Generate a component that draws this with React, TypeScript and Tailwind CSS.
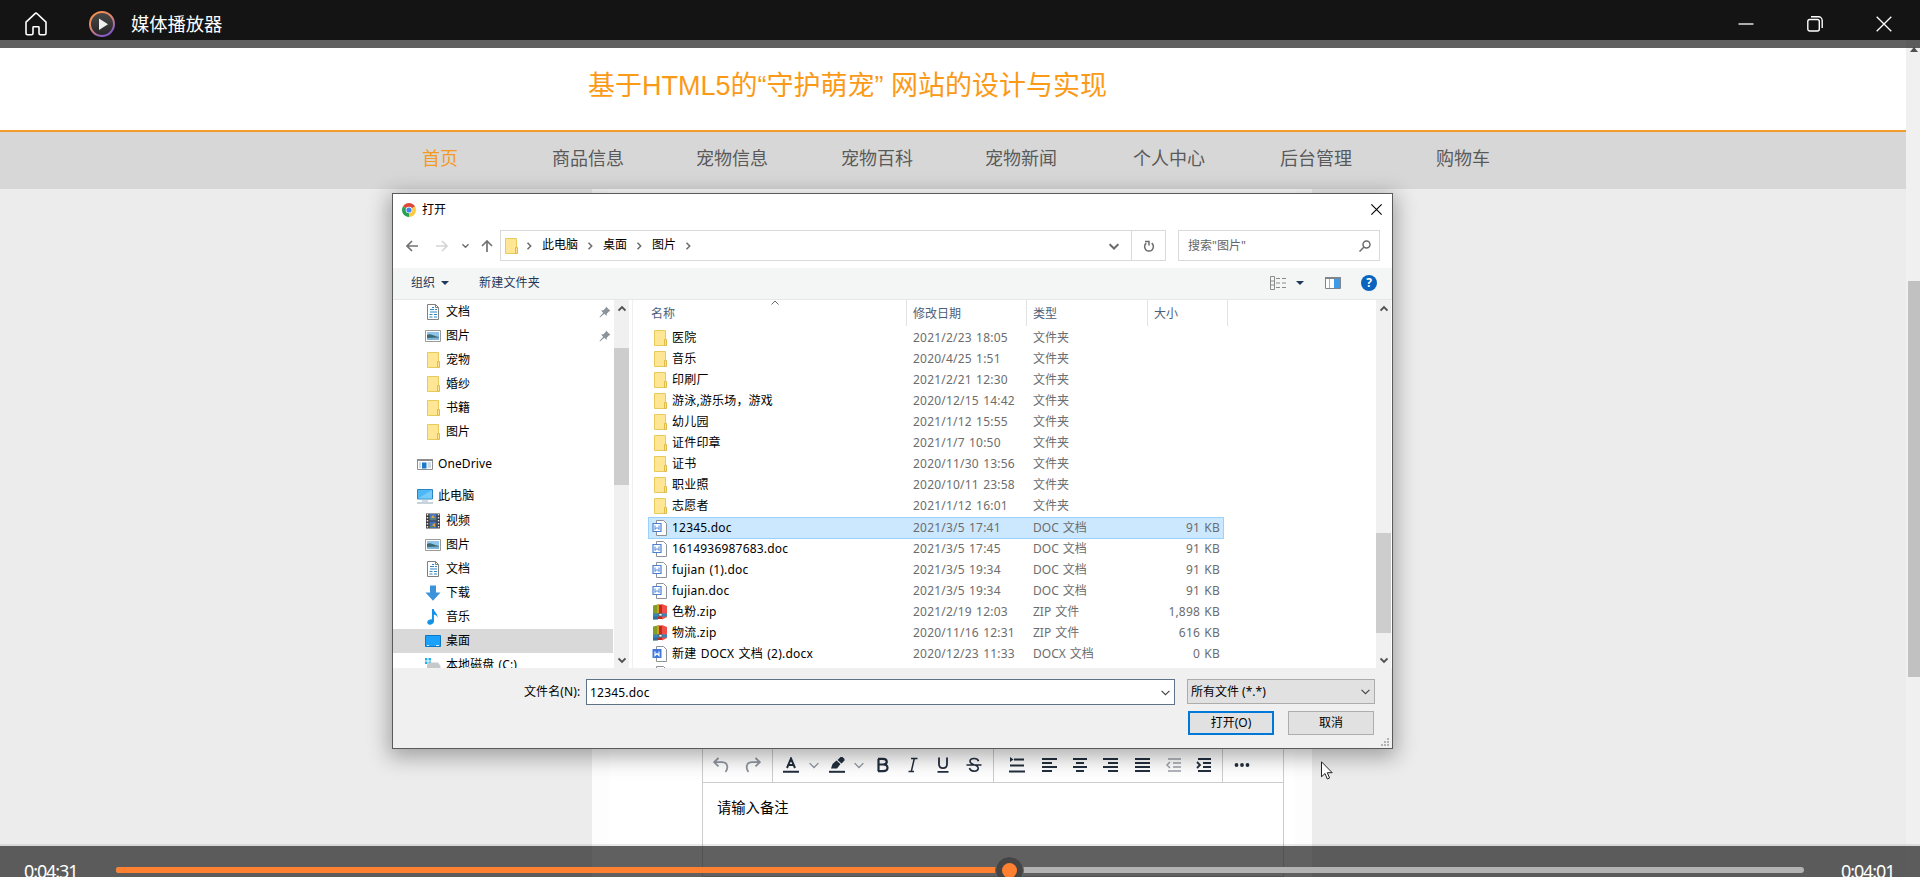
import type { ReactNode } from 'react';

type IconName =
    | 'folder' | 'document' | 'picture' | 'onedrive' | 'computer' | 'video'
    | 'download' | 'music' | 'desktop' | 'disk' | 'doc' | 'docx' | 'zip';

const navItems = [
    { label: '首页', className: 'ml-[422px] text-[#f39a1f]' },
    { label: '商品信息', className: 'ml-[94px]' },
    { label: '宠物信息', className: 'ml-[72px]' },
    { label: '宠物百科', className: 'ml-[73px]' },
    { label: '宠物新闻', className: 'ml-[72px]' },
    { label: '个人中心', className: 'ml-[76px]' },
    { label: '后台管理', className: 'ml-[75px]' },
    { label: '购物车', className: 'ml-[84px]' },
];

const treeItems: { icon: IconName; label: string; root?: boolean; pinned?: boolean; active?: boolean; gap?: string }[] = [
    { icon: 'document', label: '文档', pinned: true },
    { icon: 'picture', label: '图片', pinned: true },
    { icon: 'folder', label: '宠物' },
    { icon: 'folder', label: '婚纱' },
    { icon: 'folder', label: '书籍' },
    { icon: 'folder', label: '图片' },
    { icon: 'onedrive', label: 'OneDrive', root: true, gap: 'mt-2' },
    { icon: 'computer', label: '此电脑', root: true, gap: 'mt-2' },
    { icon: 'video', label: '视频', gap: 'mt-px' },
    { icon: 'picture', label: '图片' },
    { icon: 'document', label: '文档' },
    { icon: 'download', label: '下载' },
    { icon: 'music', label: '音乐' },
    { icon: 'desktop', label: '桌面', active: true },
    { icon: 'disk', label: '本地磁盘 (C:)' },
];

const files: { icon: IconName; name: string; date: string; type: string; size?: string; selected?: boolean; tall?: boolean }[] = [
    { icon: 'folder', name: '医院', date: '2021/2/23 18:05', type: '文件夹' },
    { icon: 'folder', name: '音乐', date: '2020/4/25 1:51', type: '文件夹' },
    { icon: 'folder', name: '印刷厂', date: '2021/2/21 12:30', type: '文件夹' },
    { icon: 'folder', name: '游泳,游乐场，游戏', date: '2020/12/15 14:42', type: '文件夹' },
    { icon: 'folder', name: '幼儿园', date: '2021/1/12 15:55', type: '文件夹' },
    { icon: 'folder', name: '证件印章', date: '2021/1/7 10:50', type: '文件夹' },
    { icon: 'folder', name: '证书', date: '2020/11/30 13:56', type: '文件夹' },
    { icon: 'folder', name: '职业照', date: '2020/10/11 23:58', type: '文件夹' },
    { icon: 'folder', name: '志愿者', date: '2021/1/12 16:01', type: '文件夹', tall: true },
    { icon: 'doc', name: '12345.doc', date: '2021/3/5 17:41', type: 'DOC 文档', size: '91 KB', selected: true, tall: true },
    { icon: 'doc', name: '1614936987683.doc', date: '2021/3/5 17:45', type: 'DOC 文档', size: '91 KB' },
    { icon: 'doc', name: 'fujian (1).doc', date: '2021/3/5 19:34', type: 'DOC 文档', size: '91 KB' },
    { icon: 'doc', name: 'fujian.doc', date: '2021/3/5 19:34', type: 'DOC 文档', size: '91 KB' },
    { icon: 'zip', name: '色粉.zip', date: '2021/2/19 12:03', type: 'ZIP 文件', size: '1,898 KB' },
    { icon: 'zip', name: '物流.zip', date: '2020/11/16 12:31', type: 'ZIP 文件', size: '616 KB' },
    { icon: 'docx', name: '新建 DOCX 文档 (2).docx', date: '2020/12/23 11:33', type: 'DOCX 文档', size: '0 KB' },
];

/* Small 16px icons of the file tree and the file list */
const iconShapes: Record<IconName, ReactNode> = {
    folder: (
        <>
            <path d="M2.5.5h11v15h-11z" fill="#ffe694" stroke="#e8c95c" />
            <path d="M12.5 9.5h2v6h-2z" fill="#ffe28a" stroke="#dfbb4a" />
        </>
    ),
    document: (
        <>
            <path d="M2.5.5h8l3 3v12h-11z" fill="#fff" stroke="#808080" />
            <path d="M10.5.5v3h3" fill="none" stroke="#808080" />
            <path d="M7 3.5h2M5 5.5h4M10 5.5h2M5 8h7M4.5 10.5h3M9 10.5h3M4.5 13h3M9 13h3" stroke="#2c86c8" strokeWidth="1.200" />
        </>
    ),
    picture: (
        <>
            <path d="M.5 2.5h15v11H.5z" fill="#fff" stroke="#9a9a9a" />
            <path d="M2 4h12v8H2z" fill="#8ec3ea" />
            <path d="M2 7c3-2 6 1 12 2v3H2z" fill="#3c6a74" />
            <path d="M2 10l12-.5V12H2z" fill="#7db5d6" />
        </>
    ),
    onedrive: (
        <>
            <path d="M.5 3.5h15v10H.5z" fill="#fff" stroke="#8d8d8d" />
            <path d="M0 3h16v2H0z" fill="#8d8d8d" />
            <path d="M5 6.500h4.500v6H5z" fill="#1979ca" />
            <path d="M2 7h2M2 9h2M2 11h2M10.500 7H14M10.500 9H14M10.500 11H14" stroke="#9bb7d0" />
        </>
    ),
    computer: (
        <>
            <path d="M.5 1.500h15v9.500H.5z" fill="#4db8f5" stroke="#2a86c4" />
            <path d="M1 10.500L15 2v8.500z" fill="#77cbfa" />
            <path d="M5 13h6" stroke="#9db6c7" />
            <path d="M0 15h16" stroke="#8fa5bb" />
        </>
    ),
    video: (
        <>
            <path d="M1 .5h14v15H1z" fill="#3a3a3a" />
            <path d="M2.500 1v14M13.500 1v14" stroke="#e6e6e6" strokeWidth="1.500" strokeDasharray="1.500 1.500" />
            <path d="M4.500 1h7v6.500h-7z" fill="#4d79c7" />
            <path d="M4.500 8.500h7V15h-7z" fill="#4470bf" />
            <path d="M6 5l2-3 2 3zM7 12l3-2v4z" fill="#e2a52e" />
            <path d="M5 6h6M5 13.500h4" stroke="#5d8a3c" />
        </>
    ),
    download: <path d="M5 .5h6v7h4.500L8 15.800.5 7.500H5z" fill="#3b93dc" />,
    music: (
        <>
            <path d="M7 0h1.800c.4 3.500 4.200 4 3.700 9-.5-2-1.700-3-3.600-3.400v6.900H7z" fill="#1592e6" />
            <ellipse cx="5.600" cy="13" rx="3.400" ry="2.500" fill="#1592e6" transform="rotate(-15 5.600 13)" />
        </>
    ),
    desktop: (
        <>
            <path d="M.5 2.500h15v11H.5z" fill="#1ba1fb" stroke="#0c78c8" />
            <path d="M2 12.500h2M11 12.500h3" stroke="#d6eeff" />
        </>
    ),
    disk: (
        <>
            <path d="M0 1h2.500v2.500H0zM3.500 1H6v2.500H3.500zM0 4.500h2.500V7H0zM3.500 4.500H6V7H3.500z" fill="#22b2e8" />
            <path d="M2 8l2-2.500h9L15.500 9v5H2z" fill="#c6c9cc" />
        </>
    ),
    doc: (
        <>
            <path d="M4.500 3V.5h7l3 3v12h-10V12" fill="#fff" stroke="#8d9298" />
            <path d="M1 3.500h8v8H1z" fill="#fff" stroke="#4a80d4" strokeWidth="1.200" />
            <path d="M3 5.500v4l2-2 2 2v-4" fill="none" stroke="#4a80d4" />
        </>
    ),
    docx: (
        <>
            <path d="M4.500 3V.5h7l3 3v12h-10V12" fill="#fff" stroke="#8d9298" />
            <path d="M.5 3h9v9h-9z" fill="#3f78dc" />
            <path d="M3 5.500v4l2-2 2 2v-4" fill="none" stroke="#fff" strokeWidth="1.200" />
        </>
    ),
    zip: (
        <>
            <path d="M1 1.500L6 .5V15l-5 .5z" fill="#7f9f27" />
            <path d="M1 11h5v4.500H1z" fill="#2b6f9e" />
            <path d="M6 .5h4V15H6z" fill="#c22a20" />
            <path d="M5 .5h2V9H5z" fill="#d2a01e" />
            <path d="M10 0l5 2v11l-5 2.500z" fill="#ee5048" />
            <path d="M1 9.500h14v3H1z" fill="#3487b6" />
            <path d="M7 9.500h3v2.500H7z" fill="#fff" stroke="#4b6577" strokeWidth=".8" />
        </>
    ),
};

function FileIcon({ name, className = '' }: { name: IconName; className?: string }) {
    return (
        <svg viewBox="0 0 16 16" className={`w-4 h-4 shrink-0 ${className}`}>
            {iconShapes[name]}
        </svg>
    );
}

function Chevron({ d, size = 8, color = '#6b6b6b', width = 1.5, className = '' }: { d: string; size?: number; color?: string; width?: number; className?: string }) {
    return (
        <svg viewBox="0 0 8 8" width={size} height={size} className={`shrink-0 ${className}`} fill="none" stroke={color} strokeWidth={width}>
            <path d={d} />
        </svg>
    );
}

const DOWN = 'M.5 2.500L4 6l3.500-3.500';
const UP = 'M.5 5.500L4 2l3.500 3.500';
const RIGHT = 'M2.500.8L5.700 4 2.500 7.200';

function TitleBar() {
    return (
        <header className="flex items-center h-10 bg-[#141414] text-white">
            <svg viewBox="0 0 24 24" className="w-6 h-6 ml-6 mt-[7px]" fill="none" stroke="#fff" strokeWidth="1.600" strokeLinejoin="round">
                <path d="M2 10.200L10.800 1.800a1.700 1.700 0 0 1 2.400 0L22 10.200v11a1.500 1.500 0 0 1-1.500 1.500h-4a1.500 1.500 0 0 1-1.500-1.500v-5.700a.8.8 0 0 0-.8-.8H9.800a.8.8 0 0 0-.8.8v5.700a1.500 1.500 0 0 1-1.500 1.500h-4A1.500 1.500 0 0 1 2 21.200z" />
            </svg>
            <svg viewBox="0 0 26 26" className="w-[26px] h-[26px] ml-[41px] mt-2">
                <defs>
                    <linearGradient id="ring" x1="0" y1="0" x2=".6" y2="1">
                        <stop offset="0" stopColor="#ff9340" />
                        <stop offset=".5" stopColor="#e0876d" />
                        <stop offset="1" stopColor="#8659c9" />
                    </linearGradient>
                    <linearGradient id="disc" x1="0" y1="0" x2="0" y2="1">
                        <stop offset="0" stopColor="#4a4a4a" />
                        <stop offset="1" stopColor="#242424" />
                    </linearGradient>
                </defs>
                <circle cx="13" cy="13" r="12" fill="url(#disc)" stroke="url(#ring)" strokeWidth="2" />
                <path d="M10 7.500v11.500l9-5.700z" fill="#eee" />
            </svg>
            <span className="ml-4 mt-2 text-[18.3px] leading-6">媒体播放器</span>
            <div className="flex items-center ml-auto mr-7 mt-[7px]">
                <svg viewBox="0 0 16 16" className="w-4 h-4" stroke="#fff" strokeWidth="1.300"><path d="M.5 8h15" /></svg>
                <svg viewBox="0 0 16 16" className="w-4 h-4 ml-[53px]" fill="none" stroke="#fff" strokeWidth="1.400">
                    <rect x=".8" y="3.500" width="11.500" height="11.500" rx="2" />
                    <path d="M4 .8h7.500a3.700 3.700 0 0 1 3.700 3.700V12" />
                </svg>
                <svg viewBox="0 0 16 16" className="w-4 h-4 ml-[53px]" stroke="#fff" strokeWidth="1.300"><path d="M.7.700l14.600 14.600M15.300.700L.7 15.300" /></svg>
            </div>
        </header>
    );
}

function Tool({ children, className, color = '#222f3e', filled = false }: { children: ReactNode; className: string; color?: string; filled?: boolean }) {
    return (
        <svg viewBox="0 0 16 16" className={`w-4 h-4 shrink-0 ${className}`} fill={filled ? color : 'none'} stroke={filled ? 'none' : color} strokeWidth="1.800">
            {children}
        </svg>
    );
}

function EditorToolbar() {
    return (
        <div className="flex h-[37px] items-stretch border-b border-[#ccc] pt-px">
            <div className="flex items-center w-[70px] border-r border-[#ccc]">
                <Tool className="ml-[10px]" color="#9096a0"><path d="M5.500 1L1.200 5.200l4.300 4.200M1.200 5.200H9c6 0 6.500 6 3.500 9.800" /></Tool>
                <Tool className="ml-4" color="#9096a0"><path d="M10.500 1l4.300 4.200-4.300 4.200M14.800 5.200H7c-6 0-6.500 6-3.500 9.800" /></Tool>
            </div>
            <div className="flex items-center w-[221px] border-r border-[#ccc]">
                <Tool className="ml-[10px]"><path d="M4 11L8 1.500 12 11M5.200 8h5.600M0 14.800h16" strokeWidth="2" /></Tool>
                <Chevron d={DOWN} size={10} color="#9096a0" width={1.100} className="ml-[10px]" />
                <Tool className="ml-[10px]"><path d="M0 14.800h16" strokeWidth="2" /><path d="M2 11.500l1.500-4.500 4-3.500 4 3.500-3.500 4.500zM8.500 3l3-3h2L15.500 2v1.500l-3 3z" fill="#222f3e" stroke="none" /></Tool>
                <Chevron d={DOWN} size={10} color="#9096a0" width={1.100} className="ml-[9px]" />
                <Tool className="ml-[11px]"><path d="M3.500 1.900v12.300M3 1.900h5c5 0 5 5.600 0 5.600H4M8 7.500c6 0 6 6.700 0 6.700H3" strokeWidth="2.200" /></Tool>
                <Tool className="ml-[14px]"><path d="M6 1.500h6.500M3.500 14.500H9M9.300 1.500l-3 13" strokeWidth="1.500" /></Tool>
                <Tool className="ml-[14px]"><path d="M4 .5v6.500c0 5.500 8 5.500 8 0V.5M2.500 14.800h11" /></Tool>
                <Tool className="ml-[15px]"><path d="M12.500 4.200C11.500.500 4 .800 4 4.300c0 2 2 2.700 4 3.400 3 .8 4.500 2 4.200 4-.5 3.500-7.800 3.300-8.700-.7M.5 8h15" strokeWidth="1.600" /></Tool>
            </div>
            <div className="flex items-center w-[229px] border-r border-[#ccc]">
                <Tool className="ml-[15px]"><path d="M5 2.500h10M1 8.500h14M0 14.500h16" /><path d="M1 0l3.500 2.500L1 5z" fill="#222f3e" stroke="none" /></Tool>
                <Tool className="ml-[17px]"><path d="M0 2h15M0 6h10M0 10h15M0 14h10" /></Tool>
                <Tool className="ml-[14px]"><path d="M1 2h14M4 6h8M1 10h14M4 14h8" /></Tool>
                <Tool className="ml-[15px]"><path d="M0 2h15M5 6h10M0 10h15M5 14h10" /></Tool>
                <Tool className="ml-4"><path d="M0 2h15M0 6h15M0 10h15M0 14h15" /></Tool>
                <Tool className="ml-[15px]" color="#9a9fa7"><path d="M2 2h13M7 6h8M7 10h8M2 14h13M4 5L1 8l3 3" strokeWidth="1.500" /></Tool>
                <Tool className="ml-[14px]"><path d="M2 2h13M7 6h8M7 10h8M2 14h13M1 5l3 3-3 3" /></Tool>
            </div>
            <div className="flex items-center">
                <Tool className="ml-[11px]" filled><circle cx="2.500" cy="8" r="1.900" /><circle cx="8" cy="8" r="1.900" /><circle cx="13.500" cy="8" r="1.900" /></Tool>
            </div>
        </div>
    );
}

function WebPage() {
    return (
        <div className="flex h-[837px] bg-[#ececec]">
            <div className="w-[1906px]">
                <div className="h-[92px] pt-[27px] bg-white border-b-2 border-[#f39b2b]">
                    <h1 className="ml-[588px] text-[27px] leading-[38px] text-[#fb9a17] whitespace-nowrap font-['Liberation_Sans','Noto_Sans_CJK_SC',sans-serif]">
                        基于HTML5的“守护萌宠” 网站的设计与实现
                    </h1>
                </div>
                <nav className="flex h-[57px] items-center pb-[6px] bg-[#d7d7d7] text-lg text-[#5a5a5a]">
                    {navItems.map((item) => (
                        <a key={item.label} href="#" className={`whitespace-nowrap ${item.className}`}>{item.label}</a>
                    ))}
                </nav>
                <main className="ml-[592px] w-[720px] h-[688px] bg-[#fdfdfd] px-[17px]">
                    <div className="h-full bg-white pt-[556px]">
                        <section className="ml-[93px] w-[582px] h-[132px] border border-[#ccc] bg-white">
                            <EditorToolbar />
                            <p className="mt-[15px] ml-[14px] text-[14.300px] leading-5 text-black">请输入备注</p>
                        </section>
                    </div>
                </main>
            </div>
            <div className="flex flex-col items-center w-[14px] pl-[2px] pt-[7px] bg-[#f0f0f0]">
                <svg viewBox="0 0 8 5" className="w-2 h-[5px] -ml-px"><path d="M4 0l4 5H0z" fill="#505050" /></svg>
                <div className="w-full h-[396px] mt-[229px] bg-[#c1c1c1]" />
            </div>
        </div>
    );
}

function ScrollBar({ thumb }: { thumb: string }) {
    return (
        <div className="flex flex-col items-center w-[15px] bg-[#f0f0f0]">
            <Chevron d={UP} color="#505050" width={1.900} className="mt-[5px]" />
            <div className={`w-full bg-[#cdcdcd] ${thumb}`} />
            <Chevron d={DOWN} color="#505050" width={1.900} className="mt-auto mb-1" />
        </div>
    );
}

function FileTree() {
    return (
        <div className="w-[221px] h-[368px] overflow-hidden pr-px">
            {treeItems.map((item, i) => (
                <div
                    key={i}
                    className={`flex items-center h-6 ${item.gap ?? ''} ${item.root ? 'pl-6' : 'pl-8'} ${item.active ? 'bg-[#d9d9d9]' : ''}`}
                >
                    <FileIcon name={item.icon} />
                    <span className="ml-[5px] whitespace-nowrap tracking-[0.1px] [word-spacing:1px]">{item.label}</span>
                    {item.pinned && (
                        <svg viewBox="0 0 12 12" className="w-3 h-3 ml-auto mr-[2px]">
                            <path d="M7 .5L11.500 5l-1.300.3L7.800 7.700 7.500 10 5.300 7.800 1 11.500l-.5-.5 3.700-4.300L2 4.500l2.500-.3L6.800 1.800z" fill="#8b939b" />
                        </svg>
                    )}
                </div>
            ))}
        </div>
    );
}

function FileList() {
    return (
        <div className="w-[744px] h-[368px] overflow-hidden border-l border-[#f0f0f0] ml-[3px] text-[#6d6d6d]">
            <div className="relative flex h-[26px] mb-px items-center text-[#4c607a]">
                <span className="w-[274px] h-full pl-[18px] pt-1 border-r border-[#e3e3e3] leading-5">名称</span>
                <span className="w-[120px] h-full pl-[6px] pt-1 border-r border-[#e3e3e3] leading-5">修改日期</span>
                <span className="w-[121px] h-full pl-[6px] pt-1 border-r border-[#e3e3e3] leading-5">类型</span>
                <span className="w-[80px] h-full pl-[6px] pt-1 border-r border-[#e3e3e3] leading-5">大小</span>
                <Chevron d={UP} width={1} className="absolute left-[138px] -top-px" />
            </div>
            {files.map((file) => (
                <div
                    key={file.name}
                    className={`flex items-center ml-[15px] w-[576px] border [word-spacing:1px] ${file.tall ? 'h-[22px]' : 'h-[21px]'} ${file.selected ? 'bg-[#cce8ff] border-[#99d1ff] -mb-px' : 'border-transparent'}`}
                >
                    <FileIcon name={file.icon} className="ml-[3px]" />
                    <span className="w-[245px] pl-1 text-black tracking-[0.2px] whitespace-nowrap">{file.name}</span>
                    <span className="w-[120px] tracking-[0.2px] whitespace-nowrap">{file.date}</span>
                    <span className="w-[100px] whitespace-nowrap">{file.type}</span>
                    <span className="ml-auto pr-[3px] tracking-[0.2px] whitespace-nowrap">{file.size}</span>
                </div>
            ))}
            <FileIcon name="doc" className="ml-[19px] mt-[2px]" />
        </div>
    );
}

function OpenDialog() {
    return (
        <div className="absolute left-[392px] top-[193px] w-[1001px] h-[556px] flex flex-col border border-[#5a5a5a] bg-white text-xs text-black shadow-[0_5px_20px_3px_rgba(0,0,0,0.32)]">
            <div className="flex items-center h-8 pb-px">
                <svg viewBox="0 0 14 14" className="w-[14px] h-[14px] ml-[9px]">
                    <path d="M7 7L.94 3.500a7 7 0 0 1 12.120 0z" fill="#dc4a3a" />
                    <path d="M7 7l6.060-3.500A7 7 0 0 1 7 14z" fill="#fbcb43" />
                    <path d="M7 7v7A7 7 0 0 1 .94 3.500z" fill="#2aa052" />
                    <circle cx="7" cy="7" r="3.300" fill="#fff" />
                    <circle cx="7" cy="7" r="2.600" fill="#4284f3" />
                </svg>
                <span className="ml-[6px]">打开</span>
                <svg viewBox="0 0 10 10" className="w-[11px] h-[11px] ml-auto mr-[10px]" stroke="#000" strokeWidth="1"><path d="M.3.300l9.400 9.400M9.700.300L.3 9.700" /></svg>
            </div>

            {/* Address row */}
            <div className="flex items-center h-[42px] pb-[3px]">
                <svg viewBox="0 0 12 12" className="w-3 h-3 ml-[13px]" fill="none" stroke="#737373" strokeWidth="1.700"><path d="M6 1L1 6l5 5M1 6h11" /></svg>
                <svg viewBox="0 0 12 12" className="w-3 h-3 ml-[18px]" fill="none" stroke="#d4d4d4" strokeWidth="1.700"><path d="M6 1l5 5-5 5M11 6H0" /></svg>
                <Chevron d={DOWN} size={7} width={1.600} className="ml-[14px]" />
                <svg viewBox="0 0 12 12" className="w-3 h-3 ml-3" fill="none" stroke="#737373" strokeWidth="1.700"><path d="M1 6l5-5 5 5M6 1v11" /></svg>
                <div className="flex items-center h-[31px] w-[666px] ml-[7px] border border-[#d9d9d9]">
                    <FileIcon name="folder" className="ml-[2px]" />
                    <Chevron d={RIGHT} className="ml-[6px]" />
                    <span className="ml-[9px] pb-px">此电脑</span>
                    <Chevron d={RIGHT} className="ml-2" />
                    <span className="ml-[9px] pb-px">桌面</span>
                    <Chevron d={RIGHT} className="ml-2" />
                    <span className="ml-[9px] pb-px">图片</span>
                    <Chevron d={RIGHT} className="ml-2" />
                    <Chevron d={DOWN} size={10} width={1.600} className="ml-auto mr-[12px]" />
                    <div className="flex items-center justify-center w-[34px] h-full border-l border-[#d9d9d9]">
                        <svg viewBox="0 0 12 12" className="w-3 h-3" fill="none" stroke="#6b6b6b" strokeWidth="1.500"><path d="M3.300 3.200a4.400 4.400 0 1 0 5.400 0M2 1.500h4V5.500" /></svg>
                    </div>
                </div>
                <div className="flex items-center h-[31px] w-[202px] ml-3 border border-[#d9d9d9] text-[#666]">
                    <span className="ml-[9px]">搜索"图片"</span>
                    <svg viewBox="0 0 12 12" className="w-3 h-3 ml-auto mr-2" fill="none" stroke="#6b6b6b" strokeWidth="1.500"><circle cx="7.500" cy="4.500" r="3.500" /><path d="M5 7L.5 11.500" /></svg>
                </div>
            </div>

            {/* Command bar */}
            <div className="flex items-center h-8 pb-px bg-[#f4f6f6] border-b border-[#e6e8e8] text-[#1e395b]">
                <span className="ml-[18px]">组织</span>
                <svg viewBox="0 0 8 4" className="w-2 h-1 ml-[6px]"><path d="M0 0h8L4 4z" fill="#1e395b" /></svg>
                <span className="ml-[30px] tracking-[0.2px]">新建文件夹</span>
                <svg viewBox="0 0 16 14" className="w-4 h-[14px] ml-auto" fill="none" stroke="#8a8a8a">
                    <path d="M.5.500h4v13h-4zM.5 5h4M.5 9h4" />
                    <path d="M6 2.500h4M12 2.500h4M6 7h4M12 7h4M6 11.500h4M12 11.500h4" />
                </svg>
                <svg viewBox="0 0 8 4" className="w-2 h-1 ml-[10px]"><path d="M0 0h8L4 4z" fill="#1e395b" /></svg>
                <svg viewBox="0 0 16 12" className="w-4 h-3 ml-[21px]">
                    <path d="M.5.500h15v11H.5z" fill="#fff" stroke="#7e868c" />
                    <path d="M0 0h16v2H0z" fill="#7e868c" />
                    <path d="M9 2h6v9H9z" fill="#3f9be8" />
                    <path d="M4.500 2v9" stroke="#a8adb1" />
                </svg>
                <span className="flex items-center justify-center w-4 h-4 ml-5 mr-[15px] rounded-full bg-[#0a63bd] text-white font-bold leading-none">?</span>
            </div>

            <div className="flex h-[368px] shrink-0">
                <FileTree />
                <ScrollBar thumb="mt-[35px] h-[137px]" />
                <FileList />
                <ScrollBar thumb="mt-[220px] h-[100px]" />
            </div>

            {/* File name and buttons */}
            <div className="relative flex-1 bg-[#f0f0f0]">
                <div className="flex items-center pt-[11px]">
                    <span className="ml-[131px] w-[62px] tracking-[0.1px]">文件名(N):</span>
                    <div className="flex items-center w-[589px] h-[26px] border border-[#5f7388] bg-white">
                        <span className="ml-[3px] pt-px tracking-[0.2px]">12345.doc</span>
                        <Chevron d={DOWN} size={9} width={1} color="#444" className="ml-auto mr-[4px]" />
                    </div>
                    <div className="flex items-center w-[188px] h-[25px] ml-3 -mt-px border border-[#acacac] bg-[#e1e1e1]">
                        <span className="ml-[3px]">所有文件 (*.*)</span>
                        <Chevron d={DOWN} size={9} width={1} color="#444" className="ml-auto mr-[4px]" />
                    </div>
                </div>
                <div className="flex pt-[6px] ml-[795px] gap-[14px]">
                    <button className="w-[86px] h-6 leading-none border-2 border-[#0078d7] bg-[#e1e1e1]">打开(O)</button>
                    <button className="w-[86px] h-6 leading-none border border-[#adadad] bg-[#e1e1e1]">取消</button>
                </div>
                <svg viewBox="0 0 8 8" className="absolute right-[3px] bottom-[2px] w-2 h-2" fill="#b4b4b4">
                    <path d="M6 0h2v2H6zM3 3h2v2H3zM6 3h2v2H6zM0 6h2v2H0zM3 6h2v2H3zM6 6h2v2H6z" />
                </svg>
            </div>
        </div>
    );
}

function PlayerBar() {
    return (
        <div className="absolute left-0 bottom-0 w-full h-[33px] border-t-2 border-[#282828]/10 bg-clip-padding bg-[#282828]/74 flex items-start text-white text-lg tracking-[-1.1px]">
            <span className="ml-6 w-[92px] mt-[11px] leading-7">0:04:31</span>
            <div className="relative w-[1688px] h-[6px] mt-[21px] rounded-full bg-[#b3b3b3]">
                <div className="w-[894px] h-full rounded-full bg-[#ff8030]" />
                <div className="absolute left-[879px] -top-[11px] flex items-center justify-center w-[29px] h-[29px] rounded-full bg-[#454545] border border-[#666]">
                    <div className="w-[15px] h-[15px] rounded-full bg-[#ff8030]" />
                </div>
            </div>
            <span className="ml-[37px] mt-[11px] leading-7">0:04:01</span>
        </div>
    );
}

export default function App() {
    return (
        <div className="relative w-[1920px] h-[877px] overflow-hidden font-['Noto_Sans','Noto_Sans_CJK_SC',sans-serif]">
            <TitleBar />
            <WebPage />
            {/* Player chrome lying over the top of the video */}
            <div className="absolute left-0 top-10 w-full h-2 bg-[#282828]/74" />
            <OpenDialog />
            <svg viewBox="0 0 12 19" className="absolute left-[1321px] top-[761px] w-3 h-[19px]">
                <path d="M.5.800v15l3.500-3.300 2.300 5.500 2.300-1-2.300-5.300h4.900z" fill="#fff" stroke="#222" />
            </svg>
            <PlayerBar />
        </div>
    );
}
